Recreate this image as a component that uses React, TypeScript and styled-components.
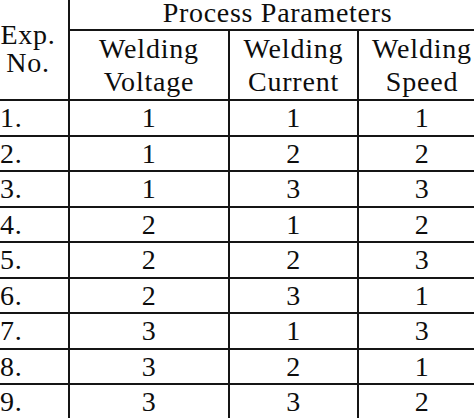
import { Fragment } from 'react';
import styled, { createGlobalStyle } from 'styled-components';

type Row = {
  no: string
  voltage: number
  current: number
  speed: number
}

const rows: Row[] = [
  { no: '1.', voltage: 1, current: 1, speed: 1 },
  { no: '2.', voltage: 1, current: 2, speed: 2 },
  { no: '3.', voltage: 1, current: 3, speed: 3 },
  { no: '4.', voltage: 2, current: 1, speed: 2 },
  { no: '5.', voltage: 2, current: 2, speed: 3 },
  { no: '6.', voltage: 2, current: 3, speed: 1 },
  { no: '7.', voltage: 3, current: 1, speed: 3 },
  { no: '8.', voltage: 3, current: 2, speed: 1 },
  { no: '9.', voltage: 3, current: 3, speed: 2 },
];

const GlobalStyle = createGlobalStyle`
  html, body {
    margin: 0;
    padding: 0;
    background: #fff;
    overflow: hidden;
  }
`;

// grid gap shows the dark background through as the rule lines
const Table = styled.div`
  display: grid;
  grid-template-columns: 68px 158px 127px 126px;
  grid-template-rows: 29px 68px;
  grid-auto-rows: 33.5px;
  gap: 2px;
  width: 485px;
  background: #151515;
  font-family: "Liberation Serif", "Times New Roman", serif;
  font-size: 28px;
  letter-spacing: 0.7px;
  color: #0d0d0d;
`;

const Cell = styled.div<{ $align?: 'left' | 'center' }>`
  background: #fff;
  display: flex;
  align-items: center;
  justify-content: ${(p) => (p.$align === 'left' ? 'flex-start' : 'center')};
  line-height: 31px;
  white-space: nowrap;
`;

const ExpHead = styled(Cell)`
  grid-row: 1 / span 2;
  flex-direction: column;
  line-height: 28px;
  padding-right: 12px;
  padding-bottom: 1px;
`;

const GroupHead = styled(Cell)`
  grid-column: 2 / span 3;
  align-items: flex-start;
  line-height: 25px;
`;

const ParamHead = styled(Cell)`
  flex-direction: column;
  line-height: 33px;
  letter-spacing: 0.8px;
`;

export default function App() {
  return (
    <>
      <GlobalStyle />
      <Table>
        <ExpHead>
          <span>Exp.</span>
          <span>No.</span>
        </ExpHead>
        <GroupHead>Process Parameters</GroupHead>
        <ParamHead>
          <span>Welding</span>
          <span>Voltage</span>
        </ParamHead>
        <ParamHead>
          <span>Welding</span>
          <span>Current</span>
        </ParamHead>
        <ParamHead>
          <span>Welding</span>
          <span>Speed</span>
        </ParamHead>
        {rows.map((row) => (
          <Fragment key={row.no}>
            <Cell $align="left">{row.no}</Cell>
            <Cell>{row.voltage}</Cell>
            <Cell>{row.current}</Cell>
            <Cell>{row.speed}</Cell>
          </Fragment>
        ))}
      </Table>
    </>
  );
}
